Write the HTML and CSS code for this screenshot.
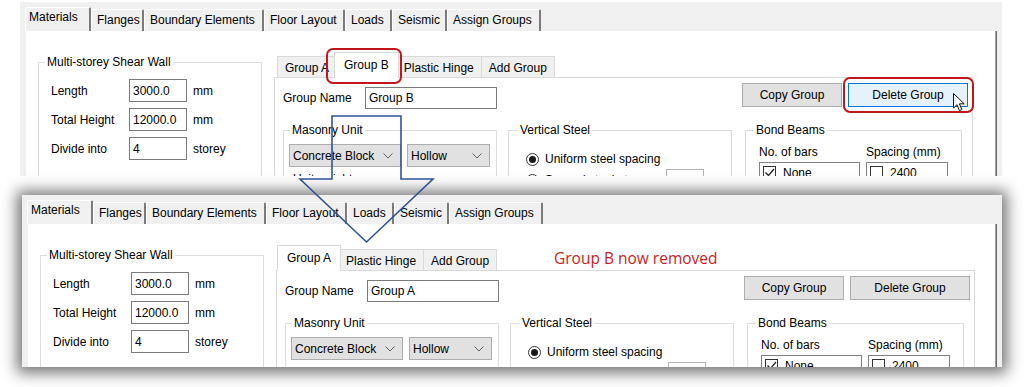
FILE: index.html
```html
<!DOCTYPE html>
<html lang="en">
<head>
<meta charset="utf-8">
<title>Delete Group</title>
<link rel="stylesheet" href="styles.css">
</head>
<body>
<div class="stage">

  <div class="shot shot--top">
    <div class="mtabs">
      <div class="mtab mtab--on">Materials</div>
      <div class="mtab">Flanges</div>
      <div class="mtab">Boundary Elements</div>
      <div class="mtab">Floor Layout</div>
      <div class="mtab">Loads</div>
      <div class="mtab">Seismic</div>
      <div class="mtab">Assign Groups</div>
    </div>
    <div class="panel">
      <fieldset class="gbox gbox--wall">
        <legend>Multi-storey Shear Wall</legend>
        <div class="fields">
          <span>Length</span><span class="tbox">3000.0</span><span>mm</span>
          <span>Total Height</span><span class="tbox">12000.0</span><span>mm</span>
          <span>Divide into</span><span class="tbox">4</span><span>storey</span>
        </div>
      </fieldset>
      <div class="itabs">
        <div class="istrip">
          <div class="itab">Group A</div>
          <div class="itab itab--on">Group B</div>
          <div class="itab">Plastic Hinge</div>
          <div class="itab">Add Group</div>
        </div>
        <div class="ipanel">
          <div class="namerow">
            <div class="namefield"><span class="namelabel">Group Name</span><span class="tbox tbox--name">Group B</span></div>
            <div class="btns"><span class="btn btn--copy">Copy Group</span><span class="btn btn--del btn--hover">Delete Group</span></div>
          </div>
          <div class="boxes">
            <fieldset class="gbox gbox--unit">
              <legend>Masonry Unit</legend>
              <div class="combos">
                <span class="combo combo--type">Concrete Block<svg width="10" height="6" viewBox="0 0 10 6"><polyline points="0.5,0.5 5,5 9.5,0.5" fill="none" stroke="#606060" stroke-width="1"/></svg></span>
                <span class="combo combo--core">Hollow<svg width="10" height="6" viewBox="0 0 10 6"><polyline points="0.5,0.5 5,5 9.5,0.5" fill="none" stroke="#606060" stroke-width="1"/></svg></span>
              </div>
              <div class="subl">Unit weight</div>
            </fieldset>
            <fieldset class="gbox gbox--vsteel">
              <legend>Vertical Steel</legend>
              <div class="rrow"><span class="radio radio--on"></span>Uniform steel spacing</div>
              <div class="rrow rrow--2"><span class="radio"></span>Spaced steel at<span class="tbox tbox--sm"></span></div>
            </fieldset>
            <fieldset class="gbox gbox--bond">
              <legend>Bond Beams</legend>
              <div class="bgrid">
                <span>No. of bars</span><span>Spacing (mm)</span>
                <div class="list"><div class="item"><span class="chk"><svg width="11" height="11" viewBox="0 0 11 11"><polyline points="1.5,5.5 4.5,8.5 10,2" fill="none" stroke="#222" stroke-width="1.3"/></svg></span>None</div></div>
                <div class="list"><div class="item"><span class="chk"></span>2400</div></div>
              </div>
            </fieldset>
          </div>
        </div>
      </div>
    </div>
  </div>

  <div class="shot shot--bottom">
    <div class="mtabs">
      <div class="mtab mtab--on">Materials</div>
      <div class="mtab">Flanges</div>
      <div class="mtab">Boundary Elements</div>
      <div class="mtab">Floor Layout</div>
      <div class="mtab">Loads</div>
      <div class="mtab">Seismic</div>
      <div class="mtab">Assign Groups</div>
    </div>
    <div class="panel">
      <fieldset class="gbox gbox--wall">
        <legend>Multi-storey Shear Wall</legend>
        <div class="fields">
          <span>Length</span><span class="tbox">3000.0</span><span>mm</span>
          <span>Total Height</span><span class="tbox">12000.0</span><span>mm</span>
          <span>Divide into</span><span class="tbox">4</span><span>storey</span>
        </div>
      </fieldset>
      <div class="itabs">
        <div class="istrip">
          <div class="itab itab--on">Group A</div>
          <div class="itab">Plastic Hinge</div>
          <div class="itab">Add Group</div>
        </div>
        <div class="ipanel">
          <div class="namerow">
            <div class="namefield"><span class="namelabel">Group Name</span><span class="tbox tbox--name">Group A</span></div>
            <div class="btns"><span class="btn btn--copy">Copy Group</span><span class="btn btn--del">Delete Group</span></div>
          </div>
          <div class="boxes">
            <fieldset class="gbox gbox--unit">
              <legend>Masonry Unit</legend>
              <div class="combos">
                <span class="combo combo--type">Concrete Block<svg width="10" height="6" viewBox="0 0 10 6"><polyline points="0.5,0.5 5,5 9.5,0.5" fill="none" stroke="#606060" stroke-width="1"/></svg></span>
                <span class="combo combo--core">Hollow<svg width="10" height="6" viewBox="0 0 10 6"><polyline points="0.5,0.5 5,5 9.5,0.5" fill="none" stroke="#606060" stroke-width="1"/></svg></span>
              </div>
              <div class="subl">Unit weight</div>
            </fieldset>
            <fieldset class="gbox gbox--vsteel">
              <legend>Vertical Steel</legend>
              <div class="rrow"><span class="radio radio--on"></span>Uniform steel spacing</div>
              <div class="rrow rrow--2"><span class="radio"></span>Spaced steel at<span class="tbox tbox--sm"></span></div>
            </fieldset>
            <fieldset class="gbox gbox--bond">
              <legend>Bond Beams</legend>
              <div class="bgrid">
                <span>No. of bars</span><span>Spacing (mm)</span>
                <div class="list"><div class="item"><span class="chk"><svg width="11" height="11" viewBox="0 0 11 11"><polyline points="1.5,5.5 4.5,8.5 10,2" fill="none" stroke="#222" stroke-width="1.3"/></svg></span>None</div></div>
                <div class="list"><div class="item"><span class="chk"></span>2400</div></div>
              </div>
            </fieldset>
          </div>
        </div>
      </div>
    </div>
  </div>

  <div class="note">Group B now removed</div>
  <div class="hl hl--tab"></div>
  <div class="hl hl--btn"></div>
  <svg class="cursor" width="14" height="21" viewBox="0 0 14 21"><path d="M1.5 1.5 V16 L5 12.7 L7.4 18.6 L9.8 17.6 L7.4 11.8 H12.2 Z" fill="#fff" stroke="#111" stroke-width="1" stroke-linejoin="round"/></svg>
  <svg class="arrow" width="1024" height="387" viewBox="0 0 1024 387"><polygon points="332,116 401,116 401,179 433,179 366.5,242 300,179 332,179" fill="none" stroke="#2f5496" stroke-width="1.6"/></svg>
</div>
</body>
</html>
```
FILE: styles.css
```css
* { box-sizing: border-box; }
html, body { margin: 0; padding: 0; }
body {
  width: 1024px; height: 387px; overflow: hidden; background: #fff;
  font-family: "Liberation Sans", Arial, sans-serif; font-size: 12px; color: #000;
}
.stage { position: relative; width: 1024px; height: 387px; padding-top: 2px; }

.shot { background: #f0f0f0; overflow: hidden; }
.shot--top { margin-left: 20px; width: 982px; height: 174px; }
.shot--bottom {
  position: relative; z-index: 1;
  margin-left: 22px; margin-top: 19px; width: 980px; height: 172px;
  box-shadow: 0 1px 14px 5px rgba(0, 0, 0, .55);
}

/* main tab strip */
.mtabs {
  display: grid; grid-template-columns: 66px 53px 120px 81px 47px 55px 94px;
  align-items: end; width: max-content; height: 29px; padding-top: 5px; margin-left: 5px;
}
.mtab {
  height: 22px; padding: 3px 0 0 5px; line-height: 14px; white-space: nowrap; overflow: hidden;
  border-top: 1px solid #fff; border-left: 1px solid #fff; border-right: 2px solid #7b7b7b;
  border-radius: 2px 2px 0 0;
}
.mtab--on { height: 24px; padding: 2px 0 0 3px; }

/* main panel */
.panel {
  display: flex; align-items: flex-start;
  margin: 0 5px 0 6px; height: 160px; padding-left: 12px;
  background: #fff; border-right: 1px solid #696969; box-shadow: inset -1px 0 0 #a0a0a0;
}

/* group boxes */
.gbox { margin: 0; min-width: 0; border: 1px solid #dcdcdc; flex: none; }
.gbox > legend { padding: 0 2px; line-height: 14px; }

.gbox--wall { width: 224px; height: 140px; margin-top: 24px; padding: 10px 0 0 12px; }
.gbox--wall > legend { margin-left: -6px; }
.fields {
  display: grid; grid-template-columns: 78px 64px auto; grid-auto-rows: 23px;
  row-gap: 6px; align-items: center;
}
.tbox {
  display: flex; align-items: center; height: 23px; padding-left: 3px;
  background: #fff; border: 1px solid #7a7a7a; white-space: nowrap;
}
.fields .tbox { width: 58px; }

/* inner tab control */
.itabs { flex: none; width: 699px; margin: 21px 0 0 12px; }
.istrip { display: flex; align-items: flex-end; height: 25px; padding-left: 3px; }
.itab {
  height: 21px; padding: 2px 7px 0; line-height: 18px; white-space: nowrap;
  background: #f0f0f0; border: 1px solid #d9d9d9; border-bottom: 0; margin-right: -1px;
}
.itab--on {
  position: relative; z-index: 1;
  height: 26px; margin: 0 -3px -1px -2px; padding: 1px 9px 0; line-height: 23px; background: #fff;
}
.ipanel { height: 130px; border: 1px solid #d9d9d9; background: #fff; padding: 5px 4px 0 8px; }

.namerow { display: flex; align-items: flex-start; }
.namefield { display: flex; align-items: center; margin-top: 4px; }
.namelabel { width: 82px; }
.tbox--name { width: 132px; height: 22px; }
.btns { display: flex; gap: 6px; margin-left: auto; }
.btn {
  display: flex; align-items: center; justify-content: center; height: 24px;
  background: #e1e1e1; border: 1px solid #adadad;
}
.btn--copy { width: 100px; }
.btn--del { width: 120px; }
.btn--hover { background: #e5f1fb; border-color: #0078d7; }

.boxes { display: flex; align-items: flex-start; margin-top: 14px; }

.gbox--unit { width: 214px; height: 80px; padding: 7px 5px 0; }
.gbox--unit > legend { margin-left: 1px; }
.combos { display: flex; gap: 6px; }
.combo {
  display: flex; align-items: center; height: 23px; padding-left: 3px; white-space: nowrap;
  background: #e1e1e1; border: 1px solid #adadad;
}
.combo svg { margin-left: auto; margin-right: 7px; }
.combo--type { width: 112px; }
.combo--core { width: 83px; }
.subl { margin-top: 5px; padding-left: 4px; }

.gbox--vsteel { width: 224px; height: 80px; margin-left: 11px; padding: 14px 27px 0 17px; }
.gbox--vsteel > legend { margin-left: -8px; }
.rrow { display: flex; align-items: center; height: 16px; white-space: nowrap; }
.rrow--2 { height: 22px; margin-top: 2px; }
.radio {
  display: flex; align-items: center; justify-content: center; flex: none;
  width: 13px; height: 13px; margin-right: 6px;
  border: 1px solid #333; border-radius: 50%; background: #fff;
}
.radio--on::after { content: ""; width: 7px; height: 7px; border-radius: 50%; background: #1a1a1a; }
.tbox--sm { width: 38px; height: 22px; margin-left: auto; border-color: #b5b5b5; }

.gbox--bond { width: 217px; height: 80px; margin-left: 13px; padding: 8px 0 0 13px; }
.gbox--bond > legend { margin-left: -5px; }
.bgrid { display: grid; grid-template-columns: 101px 82px; column-gap: 6px; row-gap: 3px; line-height: 14px; }
.list { height: 40px; padding: 3px; background: #fff; border: 1px solid #828282; }
.item { display: flex; align-items: center; height: 13px; }
.chk {
  display: flex; align-items: center; justify-content: center; flex: none;
  width: 13px; height: 13px; margin-right: 7px; background: #fff; border: 1px solid #333;
}

/* annotations over the screenshots */
.note {
  position: absolute; z-index: 2; left: 554px; top: 248px;
  font-family: "Open Sans", sans-serif; font-size: 15.5px; line-height: 20px;
  color: #c81e1e; white-space: nowrap;
}
.hl { position: absolute; z-index: 2; border: 2px solid #c3161c; border-radius: 7px; }
.hl--tab { left: 326px; top: 48px; width: 76px; height: 36px; }
.hl--btn { left: 843px; top: 77px; width: 131px; height: 36px; }
.cursor { position: absolute; z-index: 3; left: 952px; top: 92px; }
.arrow { position: absolute; z-index: 2; left: 0; top: 0; }
```
